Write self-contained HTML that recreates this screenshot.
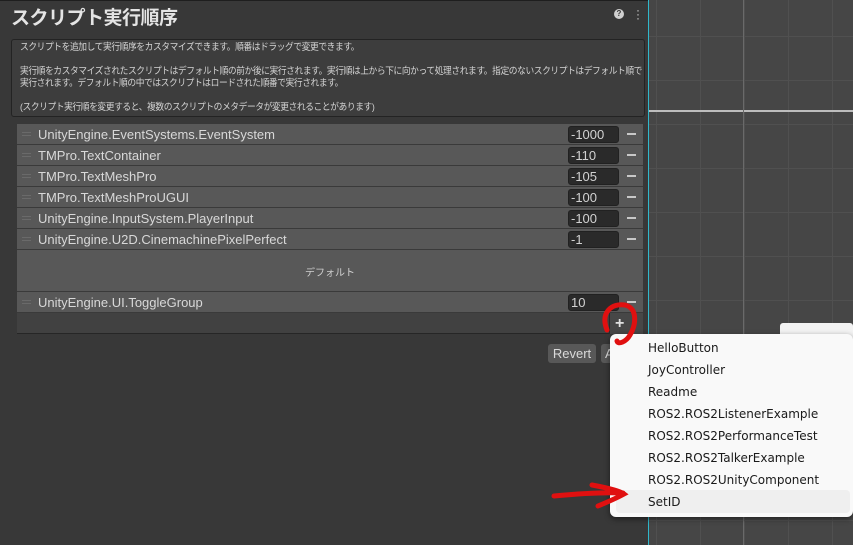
<!DOCTYPE html>
<html><head><meta charset="utf-8"><style>
*{margin:0;padding:0;box-sizing:border-box}
body{width:853px;height:545px;overflow:hidden;background:#383838;font-family:"Liberation Sans","Noto Sans CJK JP",sans-serif;position:relative}
.abs{position:absolute}
#scene{left:649px;top:0;width:204px;height:545px;background:#464646;
background-image:linear-gradient(#505050 1px,transparent 1px),linear-gradient(90deg,#505050 1px,transparent 1px);background-size:44px 44px;background-position:7px 36px,7px 0}
.row{position:absolute;left:17px;width:626px;height:21px;background:#585858;border-bottom:1px solid #3a3a3a;color:#d8d8d8;font-size:13px}
.row .t{position:absolute;left:21px;top:3px}
.row .h{position:absolute;left:5px;top:8px;width:9px;height:4px;border-top:1px solid #6a6a6a;border-bottom:1px solid #6a6a6a}
.row .n{position:absolute;left:551px;top:2px;width:51px;height:17px;background:#2a2a2a;border:1px solid #212121;border-radius:3px;font-size:13px;padding-left:2px;line-height:15px;color:#d2d2d2}
.row .m{position:absolute;left:610px;top:9px;width:9px;height:2px;background:#c8c8c8}
.pop{left:610px;top:334px;width:243px;height:183px;background:#f9f9f9;border-radius:6px;box-shadow:0 2px 6px rgba(0,0,0,.5);font-family:"DejaVu Sans","Liberation Sans",sans-serif;font-size:12px;color:#1a1a1a}
.pop div{position:absolute;left:38px}
.desc{white-space:nowrap;letter-spacing:-0.45px;transform:scaleX(0.92);transform-origin:0 0}
</style></head><body>
<div id="scene" class="abs"></div>
<div class="abs" style="left:649px;top:110px;width:204px;height:2px;background:#bdbdbd"></div>
<div class="abs" style="left:743px;top:0;width:1px;height:545px;background:#6a6a6a"></div>
<div class="abs" style="left:648px;top:0;width:1px;height:545px;background:#2fb8cc"></div>
<div class="abs" style="left:0;top:0;width:648px;height:545px;background:#383838;border-top:1px solid #1e1e1e"></div>
<div class="abs" style="left:11px;top:3px;font-size:19px;font-weight:bold;color:#e4e4e4;letter-spacing:-0.5px">スクリプト実行順序</div>
<div class="abs" style="left:614px;top:9px;width:10px;height:10px;border-radius:50%;background:#d0d0d0;font-size:8px;color:#383838;text-align:center;line-height:10px;font-weight:bold">?</div>
<div class="abs" style="left:636px;top:8px;font-size:12px;color:#ccc;line-height:4px">·<br>·<br>·</div>
<div class="abs" style="left:11px;top:39px;width:634px;height:78px;background:#3d3d3d;border:1px solid #232323;border-radius:3px"></div>
<div class="abs desc" style="left:20px;top:42px;font-size:9.5px;color:#d4d4d4;line-height:12px">スクリプトを追加して実行順序をカスタマイズできます。順番はドラッグで変更できます。<br><br>実行順をカスタマイズされたスクリプトはデフォルト順の前か後に実行されます。実行順は上から下に向かって処理されます。指定のないスクリプトはデフォルト順で<br>実行されます。デフォルト順の中ではスクリプトはロードされた順番で実行されます。<br><br>(スクリプト実行順を変更すると、複数のスクリプトのメタデータが変更されることがあります)</div>
<div class="row" style="top:124px"><i class="h"></i><span class="t">UnityEngine.EventSystems.EventSystem</span><span class="n">-1000</span><i class="m"></i></div>
<div class="row" style="top:145px"><i class="h"></i><span class="t">TMPro.TextContainer</span><span class="n">-110</span><i class="m"></i></div>
<div class="row" style="top:166px"><i class="h"></i><span class="t">TMPro.TextMeshPro</span><span class="n">-105</span><i class="m"></i></div>
<div class="row" style="top:187px"><i class="h"></i><span class="t">TMPro.TextMeshProUGUI</span><span class="n">-100</span><i class="m"></i></div>
<div class="row" style="top:208px"><i class="h"></i><span class="t">UnityEngine.InputSystem.PlayerInput</span><span class="n">-100</span><i class="m"></i></div>
<div class="row" style="top:229px"><i class="h"></i><span class="t">UnityEngine.U2D.CinemachinePixelPerfect</span><span class="n">-1</span><i class="m"></i></div>
<div class="row" style="top:250px;height:42px;text-align:center"><span style="position:absolute;left:0;right:0;top:14px;font-size:10px;color:#cfcfcf">デフォルト</span></div>
<div class="row" style="top:292px"><i class="h"></i><span class="t">UnityEngine.UI.ToggleGroup</span><span class="n">10</span><i class="m"></i></div>
<div class="abs" style="left:17px;top:313px;width:626px;height:21px;background:#414141;border-bottom:1px solid #262626"></div>
<div class="abs" style="left:609px;top:313px;width:34px;height:21px;background:#474747;border-left:1px solid #2a2a2a;color:#e0e0e0;font-size:16px;font-weight:bold;padding-left:5px;line-height:21px">+</div>
<div class="abs" style="left:548px;top:344px;width:48px;height:19px;background:#585858;border-radius:3px;color:#dadada;font-size:13px;text-align:center;line-height:19px">Revert</div>
<div class="abs" style="left:601px;top:344px;width:20px;height:19px;background:#585858;border-radius:3px;color:#dadada;font-size:13px;padding-left:4px;line-height:19px">A</div>
<div class="abs" style="left:780px;top:323px;width:73px;height:20px;background:#f3f3f3;border-radius:3px"></div>
<div class="abs pop">
<div style="top:7px">HelloButton</div>
<div style="top:29px">JoyController</div>
<div style="top:51px">Readme</div>
<div style="top:73px">ROS2.ROS2ListenerExample</div>
<div style="top:95px">ROS2.ROS2PerformanceTest</div>
<div style="top:117px">ROS2.ROS2TalkerExample</div>
<div style="top:139px">ROS2.ROS2UnityComponent</div>
<div style="left:6px;top:156px;width:234px;height:23px;background:#efefef;border-radius:4px"></div>
<div style="top:161px">SetID</div>
</div>
<svg class="abs" style="left:0;top:0" width="853" height="545"><g fill="none" stroke="#e01010" stroke-width="5" stroke-linecap="round">
<path d="M607 330 C600 312 612 303 625 305 C638 308 636 325 630 335 C626 342 618 345 617 341"/>
<path d="M554 496 C575 494 600 492 623 493 M592 485 C608 488 620 491 624 494 C615 499 605 503 598 506"/>
</g></svg>
</body></html>
